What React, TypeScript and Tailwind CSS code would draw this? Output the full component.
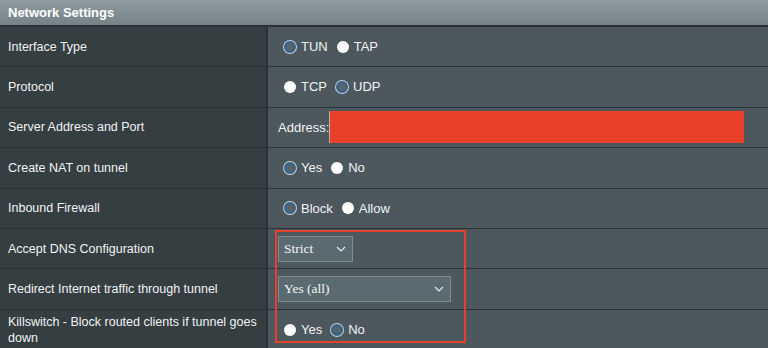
import React from "react";

const Radio = ({ checked }: { checked: boolean }) =>
  checked ? (
    <span className="inline-block w-[12px] h-[12px] rounded-full border-2 border-[#35608c] bg-[#56656c] shadow-[0_0_0_1px_#c2d0da] shrink-0" />
  ) : (
    <span className="inline-block w-[12px] h-[12px] rounded-full bg-white shrink-0" />
  );

const RadioGroup = ({ options }: { options: { label: string; checked: boolean }[] }) => (
  <div className="flex items-center gap-[9px] pl-[16px]">
    {options.map((o) => (
      <div key={o.label} className="flex items-center gap-[5px]">
        <Radio checked={o.checked} />
        <span className="text-[13px]">{o.label}</span>
      </div>
    ))}
  </div>
);

const Chevron = () => (
  <svg width="10" height="6" viewBox="0 0 10 6" className="shrink-0">
    <path d="M1 1 L5 5 L9 1" fill="none" stroke="#e6eaec" strokeWidth="1.2" />
  </svg>
);

const Select = ({ value, width }: { value: string; width: string }) => (
  <div
    className={`${width} h-[26px] ml-[10px] flex items-center justify-between pl-[5px] pr-[6px] bg-[#5a6a71] border border-[#7e8c92] text-[13.5px] font-normal text-[#f4f5f5]`}
    style={{ fontFamily: '"Liberation Serif", "Times New Roman", serif' }}
  >
    <span>{value}</span>
    <Chevron />
  </div>
);

const Row = ({ label, children, last }: { label: React.ReactNode; children: React.ReactNode; last?: boolean }) => (
  <div className={`flex h-[40.4px] ${last ? "" : "border-b-[1.5px] border-[#2b3235]"}`}>
    <div className="w-[266px] bg-[#353e41] flex items-center pl-[8px] pr-[6px] leading-[16px]">{label}</div>
    <div className="flex-1 bg-[#4c585d] border-l-2 border-[#2b3235] flex items-center">{children}</div>
  </div>
);

export default function App() {
  return (
    <div
      className="relative w-[768px] h-[348px] overflow-hidden bg-[#4c585d] text-[12.5px] text-[#f1f3f4]"
      style={{ fontFamily: '"Liberation Sans", Arial, sans-serif' }}
    >
      <div className="h-[27px] bg-gradient-to-b from-[#8e9ba1] to-[#748187] border-b-2 border-[#2b3235] flex items-center pl-[8px] font-bold text-white text-[13px]">
        Network Settings
      </div>
      <Row label="Interface Type">
        <RadioGroup options={[{ label: "TUN", checked: true }, { label: "TAP", checked: false }]} />
      </Row>
      <Row label="Protocol">
        <RadioGroup options={[{ label: "TCP", checked: false }, { label: "UDP", checked: true }]} />
      </Row>
      <Row label="Server Address and Port">
        <div className="flex items-center pl-[10px] w-full">
          <span className="text-[13px]">Address:</span>
          <div className="w-[415px] h-[32px] bg-[#e9402a] border-l border-[#b9b0ae]" />
        </div>
      </Row>
      <Row label="Create NAT on tunnel">
        <RadioGroup options={[{ label: "Yes", checked: true }, { label: "No", checked: false }]} />
      </Row>
      <Row label="Inbound Firewall">
        <RadioGroup options={[{ label: "Block", checked: true }, { label: "Allow", checked: false }]} />
      </Row>
      <Row label="Accept DNS Configuration">
        <Select value="Strict" width="w-[75px]" />
      </Row>
      <Row label="Redirect Internet traffic through tunnel">
        <Select value="Yes (all)" width="w-[173px]" />
      </Row>
      <Row label={<span>Killswitch - Block routed clients if tunnel goes down</span>} last>
        <RadioGroup options={[{ label: "Yes", checked: false }, { label: "No", checked: true }]} />
      </Row>
      <div className="absolute left-[275px] top-[230px] w-[191px] h-[113px] border-2 border-[#e4432b]" />
    </div>
  );
}
